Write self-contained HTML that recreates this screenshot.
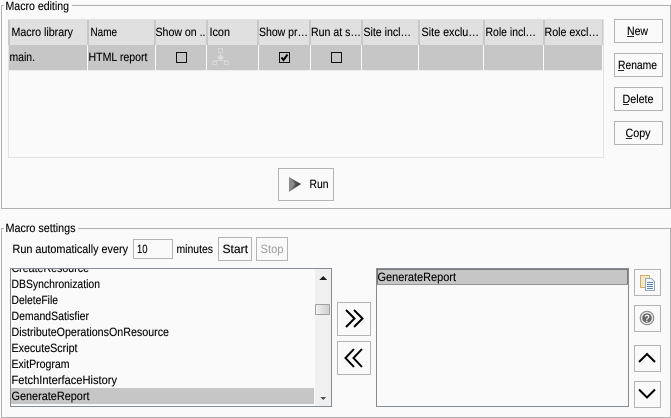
<!DOCTYPE html>
<html>
<head>
<meta charset="utf-8">
<style>
html,body{margin:0;padding:0;background:#fafafa;width:671px;height:418px;overflow:hidden}
svg{display:block}
text{font-family:"Liberation Sans",sans-serif;font-size:12px;fill:#000;stroke:#000;stroke-width:.12px;text-rendering:geometricPrecision}
.b{fill:#fafafa;stroke:#b4b4b4;stroke-width:1}
.l{stroke:#b0b0b0;stroke-width:1;fill:none}
.c{fill:none;stroke:#000;stroke-width:2}
</style>
</head>
<body>
<svg width="671" height="418" viewBox="0 0 671 418" xmlns="http://www.w3.org/2000/svg" shape-rendering="crispEdges">
<defs>
<clipPath id="lc"><rect x="11" y="269" width="304" height="137"/></clipPath>
<linearGradient id="th" x1="0" x2="1" y1="0" y2="0"><stop offset="0" stop-color="#f2f2f2"/><stop offset="1" stop-color="#cfcfcf"/></linearGradient>
<linearGradient id="tr" x1="0" x2="1" y1="0" y2="0"><stop offset="0" stop-color="#8a8a8a"/><stop offset="1" stop-color="#2c2c2c"/></linearGradient>
</defs>
<rect width="671" height="418" fill="#fafafa"/>

<!-- group 1 -->
<path class="l" d="M4 5.5H1.5V208.5H670.5V5.5H72"/>
<text x="5.5" y="10" textLength="63.5" lengthAdjust="spacingAndGlyphs">Macro editing</text>

<!-- table -->
<rect x="8.5" y="19.5" width="595" height="138" fill="#fafafa" stroke="#e2e2e2"/>
<rect x="9" y="20" width="594" height="25" fill="#e0e0e0"/>
<rect x="9" y="45" width="593" height="25" fill="#c6c6c6"/>
<rect x="9" y="70" width="593" height="1" fill="#ededed"/>
<g fill="#c8c8c8">
<rect x="8" y="20" width="2" height="25"/><rect x="87" y="20" width="2" height="25"/><rect x="154" y="20" width="2" height="25"/><rect x="206" y="20" width="2" height="25"/><rect x="257" y="20" width="2" height="25"/><rect x="309" y="20" width="2" height="25"/><rect x="361" y="20" width="2" height="25"/><rect x="418" y="20" width="2" height="25"/><rect x="483" y="20" width="2" height="25"/><rect x="543" y="20" width="2" height="25"/><rect x="602" y="20" width="1" height="25"/>
</g>
<g fill="#fafafa">
<rect x="87" y="45" width="1" height="25"/><rect x="155" y="45" width="1" height="25"/><rect x="206" y="45" width="1" height="25"/><rect x="258" y="45" width="1" height="25"/><rect x="310" y="45" width="1" height="25"/><rect x="361" y="45" width="1" height="25"/><rect x="418" y="45" width="1" height="25"/><rect x="483" y="45" width="1" height="25"/><rect x="543" y="45" width="1" height="25"/>
</g>
<text x="11.5" y="36" textLength="61.5" lengthAdjust="spacingAndGlyphs">Macro library</text>
<text x="90.5" y="36" textLength="26.5" lengthAdjust="spacingAndGlyphs">Name</text>
<text x="155.5" y="36" textLength="50" lengthAdjust="spacingAndGlyphs">Show on ..</text>
<text x="209.5" y="36" textLength="20.5" lengthAdjust="spacingAndGlyphs">Icon</text>
<text x="259" y="36" textLength="49" lengthAdjust="spacingAndGlyphs">Show pr…</text>
<text x="311" y="36" textLength="50" lengthAdjust="spacingAndGlyphs">Run at s…</text>
<text x="363.5" y="36" textLength="47.5" lengthAdjust="spacingAndGlyphs">Site incl…</text>
<text x="421.5" y="36" textLength="57.5" lengthAdjust="spacingAndGlyphs">Site exclu…</text>
<text x="485.5" y="36" textLength="50.5" lengthAdjust="spacingAndGlyphs">Role incl…</text>
<text x="544.5" y="36" textLength="54.5" lengthAdjust="spacingAndGlyphs">Role excl…</text>
<text x="9.5" y="61" textLength="25.5" lengthAdjust="spacingAndGlyphs">main.</text>
<text x="88.5" y="61" textLength="59" lengthAdjust="spacingAndGlyphs">HTML report</text>

<!-- checkboxes -->
<rect x="176.5" y="52.5" width="10" height="10" fill="none" stroke="#111"/>
<rect x="279.5" y="52.5" width="10" height="10" fill="none" stroke="#111"/>
<path d="M281.5 57.5L283.5 60L287.5 54.5" fill="none" stroke="#000" stroke-width="2" shape-rendering="auto"/>
<rect x="331.5" y="52.5" width="10" height="10" fill="none" stroke="#111"/>

<!-- disabled tree icon -->
<g fill="none" stroke="#d6d6d6">
<rect x="218.5" y="48.5" width="4" height="4"/>
<rect x="212.5" y="61.5" width="4" height="3"/>
<rect x="224.5" y="61.5" width="4" height="3"/>
<path d="M220.5 52V55M214.5 61V60.5H226.5V61"/>
</g>
<path d="M220.5 54.5L224 57.5L220.5 60.5L217 57.5Z" fill="#dcdcdc" shape-rendering="auto"/>

<!-- right buttons -->
<rect class="b" x="614.5" y="19.5" width="48" height="23"/>
<rect class="b" x="614.5" y="53.5" width="48" height="23"/>
<rect class="b" x="614.5" y="87.5" width="48" height="23"/>
<rect class="b" x="614.5" y="121.5" width="48" height="23"/>
<text x="627" y="35" textLength="21" lengthAdjust="spacingAndGlyphs">New</text>
<text x="618" y="69" textLength="39" lengthAdjust="spacingAndGlyphs">Rename</text>
<text x="622.5" y="103" textLength="31" lengthAdjust="spacingAndGlyphs">Delete</text>
<text x="625.5" y="137" textLength="25" lengthAdjust="spacingAndGlyphs">Copy</text>
<g fill="#222">
<rect x="627" y="36" width="7" height="1"/>
<rect x="618" y="70" width="6" height="1"/>
<rect x="623" y="104" width="6" height="1"/>
<rect x="626" y="138" width="6" height="1"/>
</g>

<!-- Run -->
<rect class="b" x="278.5" y="168.5" width="55" height="32"/>
<path d="M289 177L301 184L289 192Z" fill="url(#tr)" shape-rendering="auto"/>
<path d="M289 177L295 184L289 192Z" fill="#8c8c8c" shape-rendering="auto"/>
<text x="309.5" y="188" textLength="19" lengthAdjust="spacingAndGlyphs">Run</text>

<!-- group 2 -->
<path class="l" d="M4 228.5H1.5V417.5H670.5V228.5H78"/>
<text x="5.5" y="232" textLength="70" lengthAdjust="spacingAndGlyphs">Macro settings</text>
<text x="12.5" y="253" textLength="115.5" lengthAdjust="spacingAndGlyphs">Run automatically every</text>
<rect class="b" x="133.5" y="239.5" width="39" height="19"/>
<text x="137" y="253" textLength="10.5" lengthAdjust="spacingAndGlyphs">10</text>
<text x="176.5" y="253" textLength="36.5" lengthAdjust="spacingAndGlyphs">minutes</text>
<rect class="b" x="218.5" y="237.5" width="33" height="23"/>
<text x="222.5" y="253" textLength="25.5" lengthAdjust="spacingAndGlyphs">Start</text>
<rect class="b" x="256.5" y="237.5" width="31" height="23"/>
<text x="260.5" y="253" textLength="23" lengthAdjust="spacingAndGlyphs" style="fill:#9c9c9c;stroke:none">Stop</text>

<!-- left list -->
<rect x="10.5" y="268.5" width="321" height="138" fill="#fafafa" stroke="#868c94"/>
<rect x="315" y="269" width="16" height="137" fill="#f0f0f0"/>
<rect x="11" y="388" width="303" height="16" fill="#c6c6c6"/>
<g clip-path="url(#lc)">
<text x="11.5" y="272" textLength="77.5" lengthAdjust="spacingAndGlyphs">CreateResource</text>
<text x="11.5" y="288" textLength="88.5" lengthAdjust="spacingAndGlyphs">DBSynchronization</text>
<text x="11.5" y="304" textLength="46.5" lengthAdjust="spacingAndGlyphs">DeleteFile</text>
<text x="11.5" y="320" textLength="77.5" lengthAdjust="spacingAndGlyphs">DemandSatisfier</text>
<text x="11.5" y="336" textLength="157.5" lengthAdjust="spacingAndGlyphs">DistributeOperationsOnResource</text>
<text x="11.5" y="352" textLength="66" lengthAdjust="spacingAndGlyphs">ExecuteScript</text>
<text x="11.5" y="368" textLength="58" lengthAdjust="spacingAndGlyphs">ExitProgram</text>
<text x="11.5" y="384" textLength="105.5" lengthAdjust="spacingAndGlyphs">FetchInterfaceHistory</text>
<text x="11.5" y="400" textLength="78" lengthAdjust="spacingAndGlyphs">GenerateReport</text>
</g>
<path d="M323 276L327 280H319Z" fill="#222"/>
<path d="M323 400L326 397H320Z" fill="#555"/>
<rect x="315.5" y="304.5" width="14" height="10" rx="1" fill="url(#th)" stroke="#a0a0a0"/>

<!-- transfer buttons -->
<rect class="b" x="337.5" y="302.5" width="33" height="33"/>
<rect class="b" x="337.5" y="341.5" width="33" height="33"/>
<g class="c" shape-rendering="auto">
<path d="M346 310L354.5 318.5L346 327M354 310L362.5 318.5L354 327"/>
<path d="M354 349L345.5 358L354 367M362 349L353.5 358L362 367"/>
</g>

<!-- right list -->
<rect x="376.5" y="268.5" width="252" height="138" fill="#fafafa" stroke="#868c94"/>
<rect x="377" y="269" width="251" height="15" fill="#c6c6c6"/>
<rect x="377.5" y="269.5" width="250" height="15" fill="none" stroke="#333" stroke-dasharray="1 1"/>
<text x="377.5" y="281" textLength="78.5" lengthAdjust="spacingAndGlyphs">GenerateReport</text>

<!-- side buttons -->
<rect class="b" x="634.5" y="269.5" width="26" height="26"/>
<rect class="b" x="634.5" y="305.5" width="26" height="26"/>
<rect class="b" x="634.5" y="345.5" width="26" height="26"/>
<rect class="b" x="634.5" y="381.5" width="26" height="26"/>

<!-- doc icon -->
<rect x="640.5" y="275.5" width="9" height="12" fill="#f3e8c8" stroke="#cfae66"/>
<path d="M645.5 278.5H651.5L654.5 281.5V290.5H645.5Z" fill="#f4f7fb" stroke="#9aa8bc"/>
<path d="M647 282.5H653M647 284.5H653M647 286.5H653M647 288.5H653" stroke="#5f86bc"/>

<!-- help icon -->
<g shape-rendering="auto">
<circle cx="647" cy="318" r="6.7" fill="#e8e8e8" stroke="#8c8c8c" stroke-width="1.2"/>
<circle cx="647" cy="318" r="4.8" fill="#666"/>
</g>
<text x="644.3" y="322" style="font-size:10.5px;font-weight:bold;fill:#f6f6f6;stroke:none" textLength="5.6" lengthAdjust="spacingAndGlyphs">?</text>

<!-- up/down -->
<g class="c" shape-rendering="auto">
<path d="M639 362L647 354L655 362"/>
<path d="M639 389.5L647 397.5L655 389.5"/>
</g>
</svg>
</body>
</html>
